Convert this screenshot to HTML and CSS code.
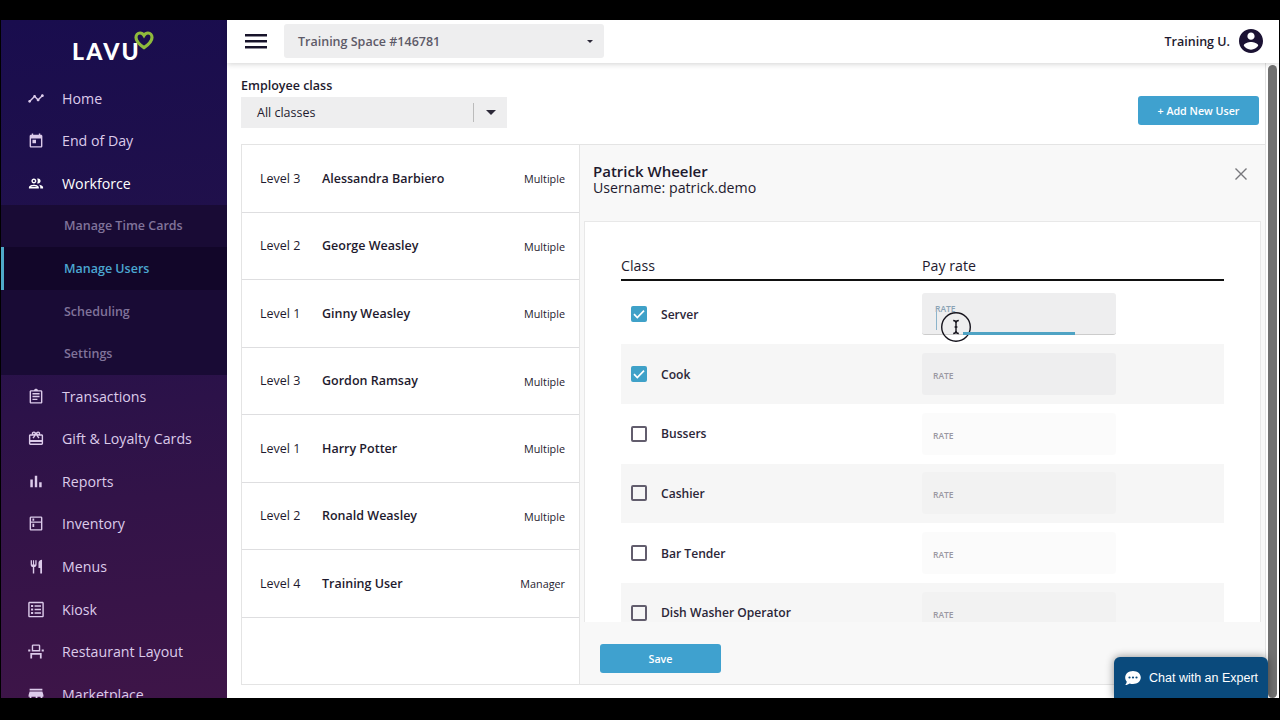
FILE: index.html
```html
<!DOCTYPE html>
<html lang="en">
<head>
    <meta charset="UTF-8">
    <meta name="viewport" content="width=device-width, initial-scale=1.0">
    <title>Manage Users</title>
    <link rel="stylesheet" href="styles.css">
</head>
<body>

<div class="app">
    <aside class="sidebar">
        <div class="logo">
            <span class="logo-text">LAVU</span>
            <svg class="logo-heart" viewBox="0 0 20 19"><path d="M10 16.6C5.4 13.4 2 10.2 2 6.4 2 3.9 3.8 2 6 2c1.7 0 3.1 1 4 2.500C10.900 3 12.300 2 14 2c2.200 0 4 1.900 4 4.400 0 3.800-3.400 7-8 10.200z" fill="none" stroke="#8fba3c" stroke-width="3.200"/></svg>
        </div>
        <nav>
            <a class="nav-item">
                <svg viewBox="0 0 24 24"><path d="M23 8c0 1.100-.9 2-2 2-.18 0-.35-.02-.51-.07l-3.560 3.550c.05.16.07.34.07.52 0 1.100-.9 2-2 2s-2-.9-2-2c0-.18.02-.36.07-.52l-2.550-2.550c-.16.05-.34.07-.52.07s-.36-.02-.52-.07l-4.550 4.560c.05.16.07.33.07.51 0 1.100-.9 2-2 2s-2-.9-2-2 .9-2 2-2c.18 0 .35.02.51.07l4.560-4.550C8.020 9.360 8 9.180 8 9c0-1.100.9-2 2-2s2 .9 2 2c0 .18-.02.36-.07.52l2.550 2.550c.16-.05.34-.07.52-.07s.36.02.52.07l3.550-3.560C19.020 8.350 19 8.180 19 8c0-1.100.9-2 2-2s2 .9 2 2z"/></svg>
                <span>Home</span>
            </a>
            <a class="nav-item">
                <svg viewBox="0 0 24 24"><path d="M19 4h-1V2h-2v2H8V2H6v2H5c-1.110 0-1.990.9-1.990 2L3 20c0 1.100.89 2 2 2h14c1.100 0 2-.9 2-2V6c0-1.100-.9-2-2-2zm0 16H5V9h14v11zM7 11h5v5H7z"/></svg>
                <span>End of Day</span>
            </a>
            <a class="nav-item current">
                <svg viewBox="0 0 24 24"><path d="M9 13.750c-2.340 0-7 1.170-7 3.500V19h14v-1.750c0-2.330-4.660-3.500-7-3.500zM4.340 17c.84-.58 2.870-1.250 4.660-1.250s3.820.67 4.660 1.250H4.340zM9 12c1.930 0 3.500-1.570 3.500-3.500S10.930 5 9 5 5.500 6.570 5.500 8.500 7.070 12 9 12zm0-5c.83 0 1.500.67 1.500 1.500S9.830 10 9 10s-1.500-.67-1.500-1.500S8.170 7 9 7zm7.040 6.810c1.160.84 1.960 1.960 1.960 3.440V19h4v-1.750c0-2.020-3.500-3.170-5.960-3.440zM15 12c1.930 0 3.500-1.570 3.500-3.500S16.930 5 15 5c-.54 0-1.040.13-1.500.35.63.89 1 1.980 1 3.150s-.37 2.260-1 3.150c.46.22.96.35 1.500.35z"/></svg>
                <span>Workforce</span>
            </a>
            <div class="submenu">
                <a>Manage Time Cards</a>
                <a class="active">Manage Users</a>
                <a>Scheduling</a>
                <a>Settings</a>
            </div>
            <a class="nav-item">
                <svg viewBox="0 0 24 24"><path d="M7 15h7v2H7zm0-4h10v2H7zm0-4h10v2H7zm12-4h-4.180C14.400 1.840 13.300 1 12 1s-2.400.84-2.820 2H5c-1.100 0-2 .9-2 2v15c0 1.100.9 2 2 2h14c1.100 0 2-.9 2-2V5c0-1.100-.9-2-2-2zm0 17H5V5h14v15z"/></svg>
                <span>Transactions</span>
            </a>
            <a class="nav-item">
                <svg viewBox="0 0 24 24"><path d="M20 6h-2.180c.11-.31.18-.65.18-1 0-1.660-1.340-3-3-3-1.050 0-1.960.54-2.500 1.350l-.5.670-.5-.68C10.960 2.540 10.050 2 9 2 7.340 2 6 3.340 6 5c0 .35.07.69.18 1H4c-1.110 0-1.990.89-1.990 2L2 19c0 1.110.89 2 2 2h16c1.110 0 2-.89 2-2V8c0-1.110-.89-2-2-2zm-5-2c.55 0 1 .45 1 1s-.45 1-1 1-1-.45-1-1 .45-1 1-1zM9 4c.55 0 1 .45 1 1s-.45 1-1 1-1-.45-1-1 .45-1 1-1zm11 15H4v-2h16v2zm0-5H4V8h5.080L7 10.830 8.620 12 12 7.400l3.380 4.600L17 10.830 14.920 8H20v6z"/></svg>
                <span>Gift &amp; Loyalty Cards</span>
            </a>
            <a class="nav-item">
                <svg viewBox="0 0 24 24"><path d="M4 9h3.500v11H4zM10.300 4h3.400v16h-3.400zM16.500 13H20v7h-3.500z"/></svg>
                <span>Reports</span>
            </a>
            <a class="nav-item">
                <svg viewBox="0 0 24 24"><path fill-rule="evenodd" d="M5 2h14c1.100 0 2 .9 2 2v16c0 1.100-.9 2-2 2H5c-1.100 0-2-.9-2-2V4c0-1.100.9-2 2-2zm0 2v5h14V4zm0 7v9h14v-9zM7 5h2.500v3H7zm0 7.500h2.500V17H7z"/></svg>
                <span>Inventory</span>
            </a>
            <a class="nav-item">
                <svg viewBox="0 0 24 24"><path d="M11 9H9.300V3H7.700v6H6.300V3H4.500v6c0 2.120 1 3.500 3 3.800V22h2v-9.200c2-.3 3.300-1.680 3.300-3.800V3H11v6zm4.500-2v7H18v8h2.500V2.500c-2.760 0-5 2-5 4.500z"/></svg>
                <span>Menus</span>
            </a>
            <a class="nav-item">
                <svg viewBox="0 0 24 24"><path fill-rule="evenodd" d="M3 1h18c1.100 0 2 .9 2 2v18c0 1.100-.9 2-2 2H3c-1.100 0-2-.9-2-2V3c0-1.100.9-2 2-2zm0 2v18h18V3zM5 5.500h3v3H5zm0 5h3v3H5zm0 5h3v3H5zM10 6h9v2h-9zm0 5h9v2h-9zm0 5h9v2h-9z"/></svg>
                <span>Kiosk</span>
            </a>
            <a class="nav-item">
                <svg viewBox="0 0 24 24"><path fill-rule="evenodd" d="M8 2h8c1.100 0 2 .9 2 2v8H6V4c0-1.100.9-2 2-2zm0 2v6h8V4zM4 14h16v8h-2.500v-5.500h-11V22H4zM1 9h3v3H1zm19 0h3v3h-3z"/></svg>
                <span>Restaurant Layout</span>
            </a>
            <a class="nav-item">
                <svg viewBox="0 0 24 24"><path fill-rule="evenodd" d="M3 4h18v2.500H3zM3 7.800h18l1.500 5V15H21v6h-2.500v-6H14v6H3v-6H1.500v-2.200zM5.500 15v4h6v-4z"/></svg>
                <span>Marketplace</span>
            </a>
        </nav>
    </aside>

    <main class="main">
        <header class="topbar">
            <div class="burger"><i></i><i></i><i></i></div>
            <div class="space-select">
                <span>Training Space #146781</span>
                <i class="caret small"></i>
            </div>
            <span class="user">Training U.</span>
            <svg class="avatar" viewBox="2 2 20 20"><path d="M12 2C6.480 2 2 6.480 2 12s4.480 10 10 10 10-4.480 10-10S17.520 2 12 2zm0 3c1.660 0 3 1.340 3 3s-1.340 3-3 3-3-1.340-3-3 1.340-3 3-3zm0 14.200c-2.500 0-4.710-1.280-6-3.220.03-1.990 4-3.080 6-3.080 1.990 0 5.970 1.090 6 3.080-1.290 1.940-3.500 3.220-6 3.220z"/></svg>
        </header>

        <div class="page">
            <div class="content">
                <div class="filters">
                    <div>
                        <div class="filter-label">Employee class</div>
                        <div class="class-select">
                            <span>All classes</span>
                            <b><i class="caret"></i></b>
                        </div>
                    </div>
                    <button class="btn">+ Add New User</button>
                </div>

                <div class="panel">
                    <div class="users">
                        <div class="user-row"><span>Level 3</span><strong>Alessandra Barbiero</strong><small>Multiple</small></div>
                        <div class="user-row"><span>Level 2</span><strong>George Weasley</strong><small>Multiple</small></div>
                        <div class="user-row"><span>Level 1</span><strong>Ginny Weasley</strong><small>Multiple</small></div>
                        <div class="user-row"><span>Level 3</span><strong>Gordon Ramsay</strong><small>Multiple</small></div>
                        <div class="user-row"><span>Level 1</span><strong>Harry Potter</strong><small>Multiple</small></div>
                        <div class="user-row"><span>Level 2</span><strong>Ronald Weasley</strong><small>Multiple</small></div>
                        <div class="user-row"><span>Level 4</span><strong>Training User</strong><small>Manager</small></div>
                    </div>

                    <section class="detail">
                        <div class="detail-head">
                            <div>
                                <h2>Patrick Wheeler</h2>
                                <p>Username: patrick.demo</p>
                            </div>
                            <svg class="close" viewBox="0 0 12 12"><path d="M.5.5l11 11M11.500.5l-11 11" fill="none" stroke="#77777c" stroke-width="1.400"/></svg>
                        </div>
                        <div class="detail-body">
                            <div class="rates-head"><span>Class</span><span>Pay rate</span></div>
                            <div class="rate-row">
                                <svg class="check on" viewBox="0 0 16 16"><path d="M3 8.200l3.300 3.300L13 4.600"/></svg>
                                <span>Server</span>
                                <div class="rate focused">
                                    <label>RATE</label>
                                    <svg class="pointer" viewBox="0 0 32 32"><circle cx="16" cy="16" r="14.300"/><path d="M13.200 9.500q2.800 0 2.800 2.500v8q0 2.500-2.800 2.500M18.800 9.500Q16 9.500 16 12M18.800 22.500Q16 22.500 16 20M14.600 16h2.800"/></svg>
                                </div>
                            </div>
                            <div class="rate-row">
                                <svg class="check on" viewBox="0 0 16 16"><path d="M3 8.200l3.300 3.300L13 4.600"/></svg>
                                <span>Cook</span>
                                <div class="rate enabled"><label>RATE</label></div>
                            </div>
                            <div class="rate-row"><i class="check"></i><span>Bussers</span><div class="rate"><label>RATE</label></div></div>
                            <div class="rate-row"><i class="check"></i><span>Cashier</span><div class="rate"><label>RATE</label></div></div>
                            <div class="rate-row"><i class="check"></i><span>Bar Tender</span><div class="rate"><label>RATE</label></div></div>
                            <div class="rate-row"><i class="check"></i><span>Dish Washer Operator</span><div class="rate"><label>RATE</label></div></div>
                        </div>
                        <div class="detail-foot"><button class="btn">Save</button></div>
                    </section>
                </div>
            </div>
            <div class="scrollbar"><i></i></div>
        </div>
    </main>

    <div class="chat">
        <svg viewBox="0 0 16 14"><path d="M8 0c4.400 0 7.800 2.800 7.800 6.500S12.400 13 8 13c-1.200 0-2.300-.2-3.300-.6C3.600 13.300 2 13.900.3 13.900c.9-1 1.400-2 1.500-3.100C.8 9.600.2 8.100.2 6.500.2 2.800 3.600 0 8 0z" fill="#fff"/><g fill="#0a4a7c"><circle cx="4.500" cy="6.500" r="1.100"/><circle cx="8" cy="6.500" r="1.100"/><circle cx="11.500" cy="6.500" r="1.100"/></g></svg>
        <span>Chat with an Expert</span>
    </div>
</div>

</body>
</html>
```
FILE: styles.css
```css
* {
    box-sizing: border-box;
}

body {
    margin: 0;
    padding: 20px 1px 22px;
    height: 720px;
    overflow: hidden;
    background: #000;
    font-family: "Open Sans", sans-serif;
    font-size: 12.5px;
    color: #1e1a2e;
}

.app {
    position: relative;
    display: flex;
    height: 678px;
    background: #fff;
    overflow: hidden;
}

/* sidebar */
.sidebar {
    width: 226px;
    flex: none;
    overflow: hidden;
    background: linear-gradient(175deg, #190d4e 0%, #20104b 30%, #321348 70%, #3e1548 100%);
}

.logo {
    display: flex;
    height: 57px;
    padding: 11px 0 0 71px;
}

.logo-text {
    margin-top: 6px;
    width: 62px;
    font-family: Lato, sans-serif;
    font-size: 23px;
    font-weight: 900;
    line-height: 28px;
    letter-spacing: 2.2px;
    color: #fff;
}

.logo-heart {
    width: 20px;
    height: 19px;
}

.nav-item {
    display: flex;
    align-items: center;
    height: 42.55px;
    padding-left: 26px;
    gap: 17px;
    font-size: 14.2px;
    color: #dccbea;
}

.nav-item svg {
    width: 18px;
    height: 17px;
    fill: currentColor;
}

.nav-item.current {
    color: #fff;
}

.submenu {
    background: #190b35;
}

.submenu a {
    display: flex;
    align-items: center;
    height: 42.6px;
    padding-left: 63px;
    font-weight: 600;
    color: #80739a;
}

.submenu .active {
    padding-left: 60px;
    border-left: 3px solid #4fa9c9;
    background: #120629;
    color: #4ba6d1;
}

/* top bar */
.main {
    flex: 1;
    min-width: 0;
    display: flex;
    flex-direction: column;
}

.topbar {
    position: relative;
    display: flex;
    align-items: center;
    height: 43px;
    flex: none;
    padding: 0 16px 1px 18px;
    box-shadow: 0 1px 6px rgba(0, 0, 0, 0.18);
}

.burger {
    display: grid;
    gap: 3px;
    width: 22px;
}

.burger i {
    height: 3px;
    border-bottom: 1px solid #8f8c98;
    background: #17132a;
}

.space-select {
    display: flex;
    align-items: center;
    justify-content: space-between;
    width: 320px;
    height: 34px;
    margin: 0 auto 0 17px;
    padding: 0 11px 0 14px;
    border-radius: 3px;
    background: #eeeeef;
    font-weight: 600;
    color: #5d5a68;
}

.caret {
    border: 5px solid transparent;
    border-top-color: #2c2938;
    border-bottom: 0;
}

.caret.small {
    border-width: 3px 3px 0;
}

.user {
    font-weight: 600;
}

.avatar {
    width: 24px;
    height: 24px;
    margin-left: 9px;
    fill: #1b1233;
}

/* page */
.page {
    display: flex;
    flex: 1;
    min-height: 0;
}

.content {
    flex: 1;
    min-width: 0;
    padding: 14px 0 0 14px;
    border-right: 1px solid #e4e4e4;
}

.scrollbar {
    width: 13px;
    padding: 2px 2px 0 2px;
}

.scrollbar i {
    display: block;
    height: 100%;
    border-radius: 5px;
    background: #717171;
}

.filters {
    display: flex;
    justify-content: space-between;
    align-items: flex-end;
    height: 51px;
    padding-right: 6px;
}

.filter-label {
    line-height: 18px;
    margin-bottom: 2px;
    font-weight: 600;
}

.class-select {
    display: flex;
    align-items: center;
    justify-content: space-between;
    width: 266px;
    height: 31px;
    padding-left: 16px;
    background: #eeeeef;
}

.class-select b {
    display: flex;
    align-items: center;
    height: 19px;
    padding: 0 11px 0 12px;
    border-left: 1px solid #bbb;
}

.btn {
    width: 121px;
    height: 29px;
    border: 0;
    border-radius: 3px;
    background: #3fa1cf;
    font-family: inherit;
    font-size: 10.7px;
    font-weight: 600;
    color: #fff;
}

.filters .btn {
    margin-bottom: 3px;
}

.panel {
    display: flex;
    height: 541px;
    margin-top: 16px;
    border: 1px solid #e4e4e4;
    border-right: 0;
}

.users {
    width: 338px;
    flex: none;
    border-right: 1px solid #e4e4e4;
}

.user-row {
    display: flex;
    align-items: center;
    height: 67.5px;
    padding: 0 14px 0 18px;
    border-bottom: 1px solid #dedee0;
}

.user-row span {
    width: 62px;
}

.user-row strong {
    font-weight: 600;
}

.user-row small {
    margin-left: auto;
    padding-top: 1px;
    font-size: 10.8px;
}

.detail {
    display: flex;
    flex-direction: column;
    flex: 1;
    min-width: 0;
    background: #f8f8f8;
}

.detail-head {
    display: flex;
    justify-content: space-between;
    height: 76px;
    padding: 18px 18px 0 13px;
}

.detail-head h2 {
    margin: 0;
    font-size: 15px;
    font-weight: 600;
    line-height: 17px;
}

.detail-head p {
    margin: 0;
    font-size: 14.2px;
    line-height: 16px;
}

.close {
    width: 12px;
    height: 12px;
    margin-top: 5px;
}

.detail-body {
    height: 401px;
    margin: 0 4px;
    padding: 31px 36px 0;
    overflow: hidden;
    border: 1px solid #e8e8e8;
    border-bottom: 0;
    background: #fff;
}

.rates-head {
    display: grid;
    grid-template-columns: 301px 1fr;
    height: 28px;
    margin-bottom: 3.5px;
    line-height: 26px;
    border-bottom: 2px solid #111;
    font-size: 14.2px;
}

.rate-row {
    display: grid;
    grid-template-columns: 40px 261px 194px;
    align-items: center;
    height: 59.7px;
    font-size: 12.1px;
    font-weight: 600;
    color: #2b2638;
}

.rate-row:nth-child(odd) {
    background: #f6f6f6;
}

.check {
    width: 16px;
    height: 16px;
    margin-left: 10px;
    border: 2px solid #625d6d;
    border-radius: 2px;
}

.check.on {
    border: 0;
    background: #3fa1c8;
    fill: none;
    stroke: #fff;
    stroke-width: 1.7;
}

.rate {
    position: relative;
    display: flex;
    align-items: center;
    height: 42px;
    padding: 3px 11px 0;
    border-radius: 3px;
    background: rgba(0, 0, 0, 0.015);
}

.rate label {
    font-size: 8.5px;
    color: #9a98a2;
}

.rate.enabled {
    background: #eeeeef;
}

.rate.focused {
    align-items: flex-start;
    padding: 10px 13px 0;
    border-bottom: 1px solid #ccc;
    background: #eeeeef;
}

.rate.focused label {
    line-height: 12px;
    color: #8aa3b5;
}

/* text caret and the growing underline of the active field */
.rate.focused::before {
    content: "";
    position: absolute;
    left: 14px;
    top: 19px;
    width: 1px;
    height: 18px;
    background: #8cb4cb;
}

.rate.focused::after {
    content: "";
    position: absolute;
    left: 41px;
    bottom: -1px;
    width: 112px;
    height: 3px;
    background: #4fa3c4;
}

.pointer {
    position: absolute;
    left: 18px;
    top: 18px;
    width: 32px;
    height: 32px;
    fill: none;
    stroke: #15131c;
    stroke-width: 1.4;
}

.detail-foot {
    flex: 1;
    padding: 22px 0 0 20px;
}

/* chat widget */
.chat {
    position: absolute;
    right: 11px;
    bottom: 0;
    display: flex;
    align-items: center;
    gap: 8px;
    width: 154px;
    height: 41px;
    padding-left: 11px;
    border-radius: 6px 6px 0 0;
    background: #0a4a7c;
    box-shadow: 0 0 8px rgba(0, 0, 0, 0.45);
    font-family: "Liberation Sans", sans-serif;
    font-size: 12.5px;
    white-space: nowrap;
    color: #fff;
}

.chat svg {
    width: 16px;
    height: 14px;
}
```
